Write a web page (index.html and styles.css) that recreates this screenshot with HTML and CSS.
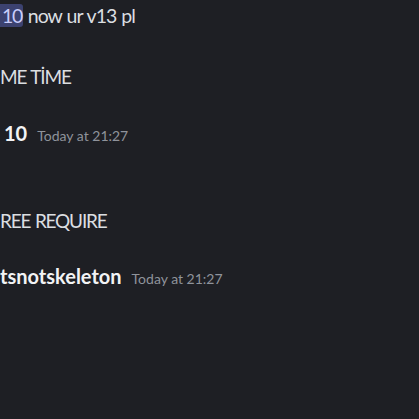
FILE: index.html
```html
<!DOCTYPE html>
<html>
<head>
<meta charset="utf-8">
<link rel="stylesheet" href="styles.css">
</head>
<body>
<main class="chat">
  <div class="line l1"><span class="mention">10</span> now ur v13 pl</div>
  <div class="line l2 caps">ME TİME</div>
  <div class="header h1"><span class="user">10</span><span class="time">Today at 21:27</span></div>
  <div class="line l3 caps">REE REQUIRE</div>
  <div class="header h2"><span class="user">tsnotskeleton</span><span class="time">Today at 21:27</span></div>
</main>
</body>
</html>
```

FILE: styles.css
```css
html, body {
  margin: 0;
  padding: 0;
  background: #1e1f24;
  height: 100%;
  overflow: hidden;
}
.chat {
  font-family: "Lato", sans-serif;
  color: #dbdee1;
  display: flex;
  flex-direction: column;
  padding-top: 2px;
}
.line {
  font-size: 19.5px;
  letter-spacing: -1px;
  word-spacing: 1px;
  line-height: 28px;
  white-space: nowrap;
}
.caps {
  font-size: 19px;
  letter-spacing: -1.2px;
  word-spacing: 1px;
}
.mention {
  background: #3c4270;
  color: #c9cdfb;
  border-radius: 0 3px 3px 0;
  padding: 0 1px 0 2px;
  letter-spacing: -1.4px;
}
.l2 { margin-top: 33px; }
.header {
  display: flex;
  align-items: baseline;
  white-space: nowrap;
  margin-top: 28px;
  line-height: 28px;
}
.user {
  font-size: 20px;
  font-weight: 700;
  color: #f2f3f5;
}
.h1 .user { padding-left: 4px; }
.time {
  font-size: 14px;
  color: #8f939b;
  margin-left: 10px;
}
.l3 { margin-top: 57px; }
.h2 { margin-top: 27px; }
```
